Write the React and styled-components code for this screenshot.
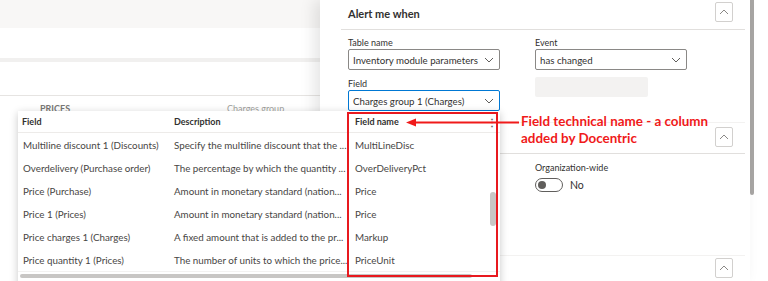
import React from "react";
import styled, { createGlobalStyle } from "styled-components";

const GlobalStyle = createGlobalStyle`
  html, body {
    margin: 0;
    padding: 0;
    background: #fff;
  }
`;

const Screen = styled.div`
  position: relative;
  display: flex;
  width: 768px;
  height: 281px;
  overflow: hidden;
  background: #fff;
  font-family: "Lato", "Open Sans", sans-serif;
  color: #323130;
`;

const Page = styled.div`
  flex: 0 0 320px;
  display: flex;
  flex-direction: column;
`;

const Band = styled.div`
  height: ${(p) => p.h}px;
  background: ${(p) => p.bg || "#fff"};
  border-bottom: ${(p) => (p.line ? "1px solid #e6e4e2" : "none")};
`;

const PricesRow = styled.div`
  display: flex;
  padding: 7px 0 0 40px;
  font-size: 9px;
  line-height: 11px;
`;

const PricesTitle = styled.span`
  width: 187px;
  font-weight: 700;
  color: #797775;
  text-transform: uppercase;
`;

const PricesLabel = styled.span`
  color: #a19f9d;
`;

const Panel = styled.div`
  flex: 0 0 430px;
  display: flex;
  flex-direction: column;
  padding: 0 5px 0 21px;
  box-sizing: border-box;
  background: #fff;
  box-shadow: -6px 0 14px rgba(0, 0, 0, 0.1);
  z-index: 1;
`;

const Section = styled.div`
  border-top: ${(p) => (p.first ? "none" : "1px solid #f3f2f1")};
`;

const SectionHeader = styled.div`
  display: flex;
  justify-content: space-between;
  align-items: flex-start;
  height: ${(p) => p.h}px;
  padding-left: 7px;
  border-bottom: ${(p) => (p.noLine ? "none" : "1px solid #e1dfdd")};
`;

const Title = styled.h2`
  margin: 0;
  font-size: 11px;
  font-weight: 700;
  line-height: 28px;
`;

const CollapseButton = styled.button`
  width: 18px;
  height: 20px;
  margin: ${(p) => p.top}px 12px 0 0;
  padding: 0;
  border: 1px solid #d2d0ce;
  border-radius: 2px;
  background: #fff;
  display: flex;
  align-items: center;
  justify-content: center;
`;

const Body = styled.div`
  display: grid;
  grid-template-columns: 152px 152px;
  column-gap: 35px;
  align-content: start;
  height: ${(p) => p.h}px;
  padding: ${(p) => p.pt}px 0 0 7px;
  box-sizing: border-box;
`;

const FieldGroup = styled.div`
  display: flex;
  flex-direction: column;
  grid-column: ${(p) => p.col || "auto"};
  margin-top: ${(p) => p.mt || 0}px;
`;

const Label = styled.label`
  font-size: 9px;
  line-height: 11px;
  margin-bottom: 1px;
`;

const Select = styled.div`
  display: flex;
  align-items: center;
  justify-content: space-between;
  height: 21px;
  padding: 0 5px 0 4px;
  box-sizing: border-box;
  border: 1px solid ${(p) => (p.focused ? "#0078d4" : "#8a8886")};
  border-radius: 2px;
  font-size: 9.7px;
  white-space: nowrap;
`;

const GreyBox = styled.div`
  width: 113px;
  height: 20px;
  margin-top: 7px;
  border-radius: 2px;
  background: #f3f2f1;
`;

const ToggleRow = styled.div`
  display: flex;
  align-items: center;
  gap: 7px;
  margin-top: 4px;
  font-size: 10.5px;
`;

const Toggle = styled.div`
  width: 28px;
  height: 14px;
  box-sizing: border-box;
  border: 1px solid #605e5c;
  border-radius: 7px;
  display: flex;
  align-items: center;
  padding-left: 2px;

  &::after {
    content: "";
    width: 8px;
    height: 8px;
    border-radius: 50%;
    background: #605e5c;
  }
`;

const ScrollColumn = styled.div`
  flex: 1;
`;

const ScrollThumb = styled.div`
  width: 4px;
  height: 195px;
  background: #a8a6a4;
  border-radius: 0 0 2px 2px;
`;

const Popup = styled.div`
  position: absolute;
  left: 18px;
  top: 111px;
  width: 482px;
  height: 180px;
  background: #fff;
  box-shadow: 0 2px 8px rgba(0, 0, 0, 0.22);
  z-index: 5;
`;

const Row = styled.div`
  display: grid;
  grid-template-columns: 152px 178px 1fr;
  align-items: center;
  height: ${(p) => (p.head ? 21 : 23)}px;
  border-bottom: ${(p) => (p.head ? "1px solid #edebe9" : "none")};
  font-size: ${(p) => (p.head ? 9 : 9.8)}px;
  font-weight: ${(p) => (p.head ? 700 : 400)};
  color: ${(p) => (p.head ? "#323130" : "#484644")};
`;

const Cell = styled.div`
  display: flex;
  justify-content: space-between;
  padding: 0 3px 0 ${(p) => p.pl}px;
  white-space: nowrap;
  overflow: hidden;
`;

const ColumnMenu = styled.span`
  color: #605e5c;
  font-weight: 700;
  font-size: 10px;
`;

const HScroll = styled.div`
  border-top: 1px solid #f3f2f1;
  padding: 2px 0 0 2px;
`;

const HThumb = styled.div`
  width: 452px;
  height: 4px;
  border-radius: 2px;
  background: #c8c6c4;
`;

const VThumb = styled.div`
  position: absolute;
  left: 472px;
  top: 81px;
  width: 6px;
  height: 34px;
  border-radius: 3px;
  background: #c8c6c4;
`;

const Highlight = styled.div`
  position: absolute;
  left: 329px;
  top: 1px;
  width: 151px;
  height: 165px;
  border: 2px solid #e8191f;
  box-sizing: border-box;
  z-index: 6;
`;

const Arrow = styled.svg`
  position: absolute;
  left: 406px;
  top: 114px;
  z-index: 7;
`;

const Note = styled.div`
  position: absolute;
  left: 521px;
  top: 113px;
  font-family: "Lato", "Open Sans", sans-serif;
  font-weight: 700;
  font-size: 13.4px;
  line-height: 17px;
  color: #f01a1a;
  z-index: 7;
`;

const Chevron = () => (
  <svg width="10" height="6" viewBox="0 0 10 6">
    <path d="M1 1 L5 5 L9 1" fill="none" stroke="#605e5c" strokeWidth="1" />
  </svg>
);

const Caret = () => (
  <svg width="10" height="6" viewBox="0 0 10 6">
    <path d="M1 5 L5 1 L9 5" fill="none" stroke="#8a8886" strokeWidth="1" />
  </svg>
);

const rows = [
  ["Multiline discount 1 (Discounts)", "Specify the multiline discount that the ...", "MultiLineDisc"],
  ["Overdelivery (Purchase order)", "The percentage by which the quantity ...", "OverDeliveryPct"],
  ["Price (Purchase)", "Amount in monetary standard (nation...", "Price"],
  ["Price 1 (Prices)", "Amount in monetary standard (nation...", "Price"],
  ["Price charges 1 (Charges)", "A fixed amount that is added to the pr...", "Markup"],
  ["Price quantity 1 (Prices)", "The number of units to which the price...", "PriceUnit"],
];

const App = () => {
  return (
    <>
      <GlobalStyle />
      <Screen>
        <Page>
          <Band h={28} bg="#f8f7f6" />
          <Band h={30} />
          <Band h={4} bg="#f1f0ef" />
          <Band h={33} line />
          <PricesRow>
            <PricesTitle>Prices</PricesTitle>
            <PricesLabel>Charges group</PricesLabel>
          </PricesRow>
        </Page>

        <Panel>
          <Section first>
            <SectionHeader h={29}>
              <Title>Alert me when</Title>
              <CollapseButton top={2}>
                <Caret />
              </CollapseButton>
            </SectionHeader>
            <Body h={92} pt={7}>
              <FieldGroup>
                <Label>Table name</Label>
                <Select>
                  Inventory module parameters
                  <Chevron />
                </Select>
              </FieldGroup>
              <FieldGroup>
                <Label>Event</Label>
                <Select>
                  has changed
                  <Chevron />
                </Select>
              </FieldGroup>
              <FieldGroup mt={8}>
                <Label>Field</Label>
                <Select focused>
                  Charges group 1 (Charges)
                  <Chevron />
                </Select>
              </FieldGroup>
              <FieldGroup>
                <GreyBox />
              </FieldGroup>
            </Body>
          </Section>

          <Section>
            <SectionHeader h={30}>
              <span />
              <CollapseButton top={4}>
                <Caret />
              </CollapseButton>
            </SectionHeader>
            <Body h={101} pt={8}>
              <FieldGroup col={2}>
                <Label>Organization-wide</Label>
                <ToggleRow>
                  <Toggle />
                  No
                </ToggleRow>
              </FieldGroup>
            </Body>
          </Section>

          <Section>
            <SectionHeader h={30} noLine>
              <span />
              <CollapseButton top={2}>
                <Caret />
              </CollapseButton>
            </SectionHeader>
          </Section>
        </Panel>

        <ScrollColumn>
          <ScrollThumb />
        </ScrollColumn>

        <Popup>
          <Row head>
            <Cell pl={4}>Field</Cell>
            <Cell pl={4}>Description</Cell>
            <Cell pl={7}>
              Field name
              <ColumnMenu>⋮</ColumnMenu>
            </Cell>
          </Row>
          {rows.map(([field, desc, name], i) => (
            <Row key={i}>
              <Cell pl={5}>{field}</Cell>
              <Cell pl={4}>{desc}</Cell>
              <Cell pl={7}>{name}</Cell>
            </Row>
          ))}
          <HScroll>
            <HThumb />
          </HScroll>
          <VThumb />
          <Highlight />
        </Popup>

        <Arrow width="114" height="17" viewBox="0 0 114 17">
          <polygon points="0,8.5 10,4.5 10,12.5" fill="#f01a1a" />
          <line x1="9" y1="8.5" x2="113" y2="8.5" stroke="#f01a1a" strokeWidth="2" />
        </Arrow>
        <Note>
          Field technical name - a column
          <br />
          added by Docentric
        </Note>
      </Screen>
    </>
  );
};

export default App;
